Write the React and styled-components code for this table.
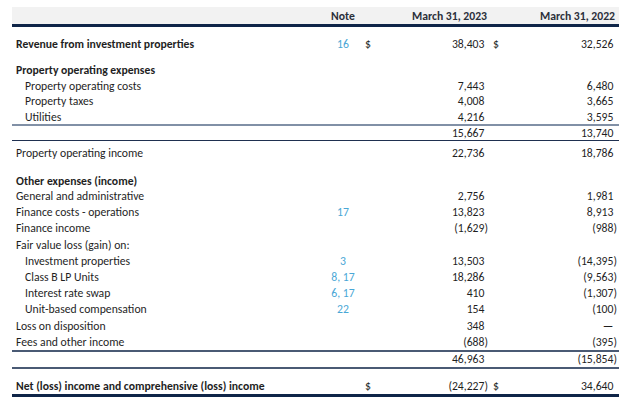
import React from 'react';
import styled, { createGlobalStyle } from 'styled-components';

const GlobalStyle = createGlobalStyle`
  body {
    margin: 0;
    background: #ffffff;
    font-family: Calibri, Carlito, Lato, "Liberation Sans", sans-serif;
    color: #1f1f1f;
  }
`;

const COLS = '311px 40px 20px 107px 20px 109px';

const RULES = {
  none: 'none',
  mid: '2px solid #8190a6',
  navy: '1px solid #1f3050',
  slate: '2px solid #4a5a74',
  heavy: '3px solid #0f2548',
};

// statement rows, top to bottom
const rows = [
  { gap: 9 },
  { label: 'Revenue from investment properties', bold: true, note: '16', cur1: true, v1: '38,403', cur2: true, v2: '32,526', h: 16 },
  { gap: 10 },
  { label: 'Property operating expenses', bold: true, h: 16 },
  { label: 'Property operating costs', indent: true, v1: '7,443', v2: '6,480', h: 15.5 },
  { label: 'Property taxes', indent: true, v1: '4,008', v2: '3,665', h: 15.5 },
  { label: 'Utilities', indent: true, v1: '4,216', v2: '3,595', h: 15, rule: 'mid' },
  { v1: '15,667', v2: '13,740', h: 14, rule: 'navy' },
  { gap: 4 },
  { label: 'Property operating income', v1: '22,736', v2: '18,786', h: 16 },
  { gap: 12 },
  { label: 'Other expenses (income)', bold: true, h: 15 },
  { label: 'General and administrative', v1: '2,756', v2: '1,981', h: 16.2 },
  { label: 'Finance costs - operations', note: '17', v1: '13,823', v2: '8,913', h: 16.2 },
  { label: 'Finance income', v1: '(1,629)', v2: '(988)', h: 16.2 },
  { label: 'Fair value loss (gain) on:', h: 16.2 },
  { label: 'Investment properties', indent: true, note: '3', v1: '13,503', v2: '(14,395)', h: 16.2 },
  { label: 'Class B LP Units', indent: true, note: '8, 17', v1: '18,286', v2: '(9,563)', h: 16.2 },
  { label: 'Interest rate swap', indent: true, note: '6, 17', v1: '410', v2: '(1,307)', h: 16.2 },
  { label: 'Unit-based compensation', indent: true, note: '22', v1: '154', v2: '(100)', h: 16.2 },
  { label: 'Loss on disposition', v1: '348', v2: '—', h: 16.2 },
  { label: 'Fees and other income', v1: '(688)', v2: '(395)', h: 16.2, rule: 'slate' },
  { v1: '46,963', v2: '(15,854)', h: 15, rule: 'slate' },
  { gap: 9 },
  { label: 'Net (loss) income and comprehensive (loss) income', bold: true, cur1: true, v1: '(24,227)', cur2: true, v2: '34,640', h: 16, rule: 'heavy' },
];

// accounting format: positives keep room for the closing paren
const Amount = ({ value }) => {
  const neg = value.startsWith('(');
  return (
    <>
      {value}
      {!neg && <Paren>)</Paren>}
    </>
  );
};

const IncomeStatement = () => (
  <Sheet>
    <Header>
      <span />
      <HeadCell $align="center">Note</HeadCell>
      <span />
      <HeadCell $align="right" $pad={3}>March 31, 2023</HeadCell>
      <span />
      <HeadCell $align="right" $pad={4}>March 31, 2022</HeadCell>
    </Header>
    {rows.map((r, i) =>
      r.gap ? (
        <Gap key={i} $h={r.gap} />
      ) : (
        <Row key={i} $h={r.h} $rule={r.rule || 'none'}>
          <Label $bold={r.bold} $indent={r.indent}>{r.label}</Label>
          <Note>{r.note}</Note>
          <Currency $pad={2}>{r.cur1 ? '$' : ''}</Currency>
          <Value>{r.v1 && <Amount value={r.v1} />}</Value>
          <Currency $pad={3}>{r.cur2 ? '$' : ''}</Currency>
          <Value>{r.v2 && <Amount value={r.v2} />}</Value>
        </Row>
      )
    )}
  </Sheet>
);

export default function App() {
  return (
    <>
      <GlobalStyle />
      <IncomeStatement />
    </>
  );
}

const Sheet = styled.div`
  width: 607px;
  margin: 7px 0 0 12px;
  font-size: 11.7px;
`;

const Header = styled.div`
  display: grid;
  grid-template-columns: ${COLS};
  height: 17px;
  align-items: center;
  background: #f2f2f2;
  border-bottom: 3px solid #0f2548;
  box-sizing: content-box;
`;

const HeadCell = styled.div`
  font-weight: 700;
  color: #2b2f3a;
  text-align: ${(p) => p.$align};
  padding-right: ${(p) => p.$pad || 0}px;
  white-space: nowrap;
`;

const Gap = styled.div`
  height: ${(p) => p.$h}px;
`;

const Row = styled.div`
  display: grid;
  grid-template-columns: ${COLS};
  height: ${(p) => p.$h}px;
  align-items: center;
  border-bottom: ${(p) => RULES[p.$rule]};
  box-sizing: content-box;
  white-space: nowrap;
`;

const Label = styled.div`
  padding-left: ${(p) => (p.$indent ? 13 : 4)}px;
  font-weight: ${(p) => (p.$bold ? 700 : 400)};
`;

const Note = styled.div`
  text-align: center;
  color: #4aa7d6;
`;

const Currency = styled.div`
  padding-left: ${(p) => p.$pad}px;
`;

const Value = styled.div`
  text-align: right;
  padding-right: 2px;
`;

const Paren = styled.span`
  visibility: hidden;
`;
